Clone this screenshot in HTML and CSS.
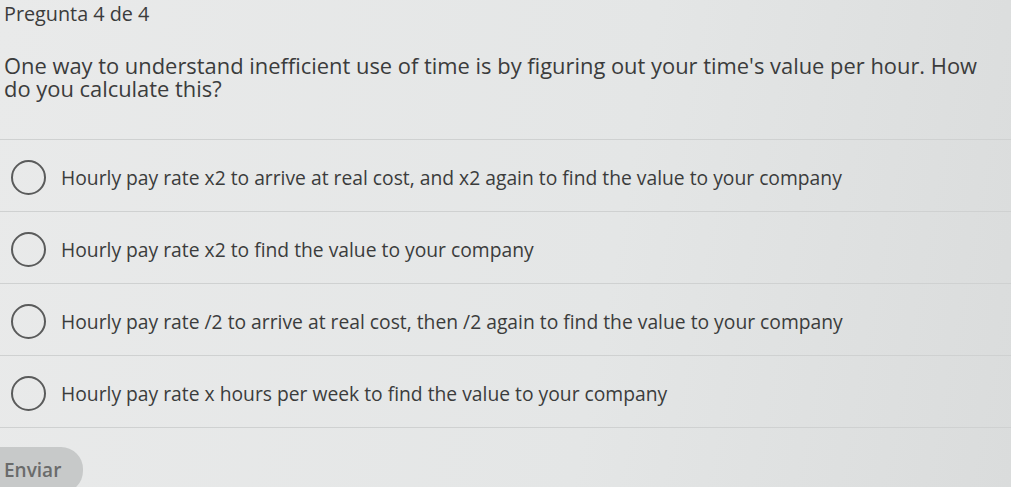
FILE: index.html
```html
<!DOCTYPE html>
<html lang="es">
<head>
    <meta charset="UTF-8">
    <meta name="viewport" content="width=device-width, initial-scale=1.0">
    <title>Pregunta 4 de 4</title>
    <link rel="stylesheet" href="styles.css">
</head>
<body>
    <div class="quiz">
        <div class="counter">Pregunta 4 de 4</div>
        <div class="question">
            One way to understand inefficient use of time is by figuring out your time's value per hour. How do you calculate this?
        </div>

        <div class="options">
            <label class="option">
                <span class="radio"></span>
                <span class="option-text">Hourly pay rate x2 to arrive at real cost, and x2 again to find the value to your company</span>
            </label>
            <label class="option">
                <span class="radio"></span>
                <span class="option-text">Hourly pay rate x2 to find the value to your company</span>
            </label>
            <label class="option">
                <span class="radio"></span>
                <span class="option-text">Hourly pay rate /2 to arrive at real cost, then /2 again to find the value to your company</span>
            </label>
            <label class="option">
                <span class="radio"></span>
                <span class="option-text">Hourly pay rate x hours per week to find the value to your company</span>
            </label>
        </div>

        <button class="submit">Enviar</button>
    </div>
</body>
</html>
```

FILE: styles.css
```css
body {
    font-family: "Open Sans", "Noto Sans", sans-serif;
    background: linear-gradient(100deg, #e9eaea 0%, #e4e6e6 60%, #dadcdc 100%);
    color: #3b3c3c;
    margin: 0;
    padding: 0;
    height: 487px;
    overflow: hidden;
}
.quiz {
    display: flex;
    flex-direction: column;
}
.counter {
    font-size: 19.8px;
    padding: 2px 4px 0;
    line-height: 24px;
}
.question {
    font-size: 21.9px;
    line-height: 23px;
    padding: 28px 12px 0 4px;
}
.options {
    margin-top: 39px;
    border-top: 1px solid #cfd1d1;
}
.option {
    display: flex;
    align-items: center;
    box-sizing: border-box;
    height: 72px;
    border-bottom: 1px solid #cfd1d1;
    padding: 4px 0 0 11px;
}
.radio {
    width: 31px;
    height: 31px;
    border: 2px solid #5a5b5b;
    border-radius: 50%;
    flex-shrink: 0;
    margin-right: 15px;
}
.option-text {
    font-size: 19.3px;
}
.submit {
    align-self: flex-start;
    margin-top: 19px;
    height: 46px;
    padding: 0 22px 0 4px;
    background-color: #c7c9c9;
    color: #6a6b6b;
    border: none;
    border-radius: 0 22px 22px 0;
    font-family: "Open Sans", "Noto Sans", sans-serif;
    font-size: 19px;
    font-weight: 600;
    text-align: left;
}
```
